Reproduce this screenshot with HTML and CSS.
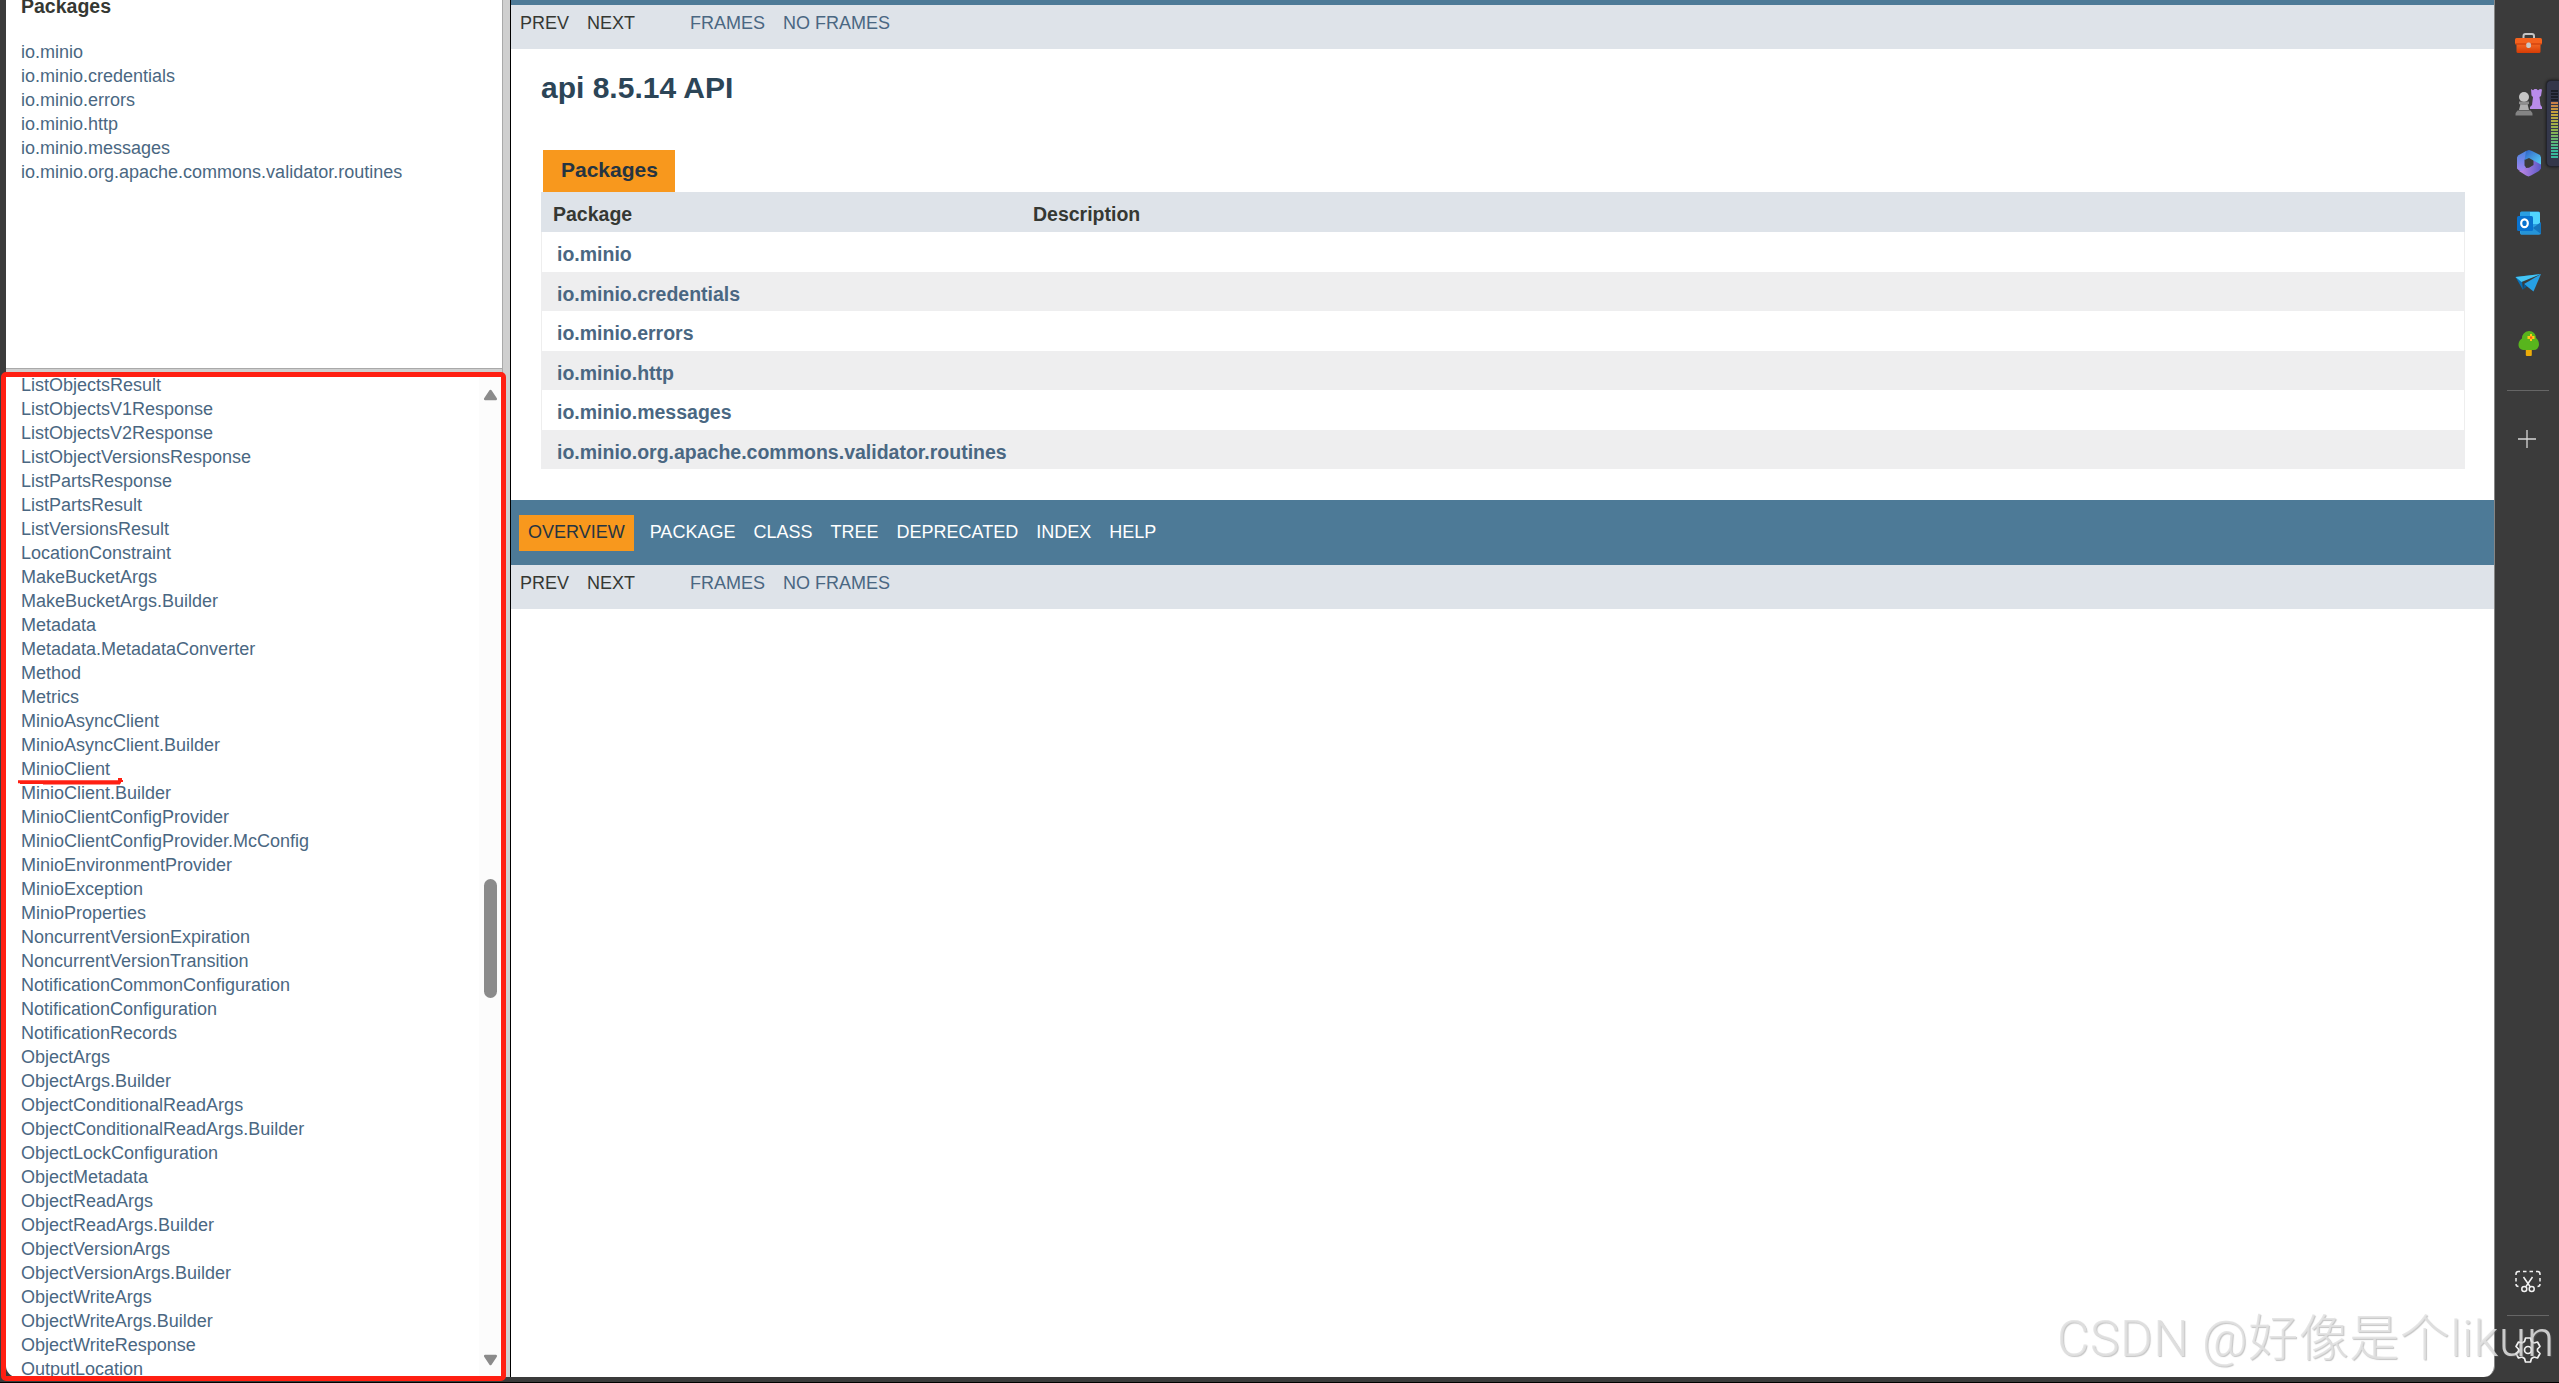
FILE: index.html
```html
<!DOCTYPE html>
<html lang="en">
<head>
  <meta charset="UTF-8">
  <title>api 8.5.14 API</title>
  <link rel="stylesheet" href="styles.css">
</head>
<body>
  <div class="window">
    <div class="frameset">
      <!-- Left frames -->
      <div class="left-container">
        <div class="package-frame">
          <h2>Packages</h2>
          <ul>
            <li><a>io.minio</a></li>
            <li><a>io.minio.credentials</a></li>
            <li><a>io.minio.errors</a></li>
            <li><a>io.minio.http</a></li>
            <li><a>io.minio.messages</a></li>
            <li><a>io.minio.org.apache.commons.validator.routines</a></li>
          </ul>
        </div>
        <div class="class-frame">
          <ul>
            <li><a>ListObjectsResult</a></li>
            <li><a>ListObjectsV1Response</a></li>
            <li><a>ListObjectsV2Response</a></li>
            <li><a>ListObjectVersionsResponse</a></li>
            <li><a>ListPartsResponse</a></li>
            <li><a>ListPartsResult</a></li>
            <li><a>ListVersionsResult</a></li>
            <li><a>LocationConstraint</a></li>
            <li><a>MakeBucketArgs</a></li>
            <li><a>MakeBucketArgs.Builder</a></li>
            <li><a>Metadata</a></li>
            <li><a>Metadata.MetadataConverter</a></li>
            <li><a>Method</a></li>
            <li><a>Metrics</a></li>
            <li><a>MinioAsyncClient</a></li>
            <li><a>MinioAsyncClient.Builder</a></li>
            <li class="marked"><a>MinioClient</a>
              <svg class="underline" width="106" height="8" viewBox="0 0 106 8"><path d="M0 2.200H100V0H104V2H105V4H103V5.500H102V6.600H25V6H2V5.300H0Z" fill="#ff1f12"/></svg>
            </li>
            <li><a>MinioClient.Builder</a></li>
            <li><a>MinioClientConfigProvider</a></li>
            <li><a>MinioClientConfigProvider.McConfig</a></li>
            <li><a>MinioEnvironmentProvider</a></li>
            <li><a>MinioException</a></li>
            <li><a>MinioProperties</a></li>
            <li><a>NoncurrentVersionExpiration</a></li>
            <li><a>NoncurrentVersionTransition</a></li>
            <li><a>NotificationCommonConfiguration</a></li>
            <li><a>NotificationConfiguration</a></li>
            <li><a>NotificationRecords</a></li>
            <li><a>ObjectArgs</a></li>
            <li><a>ObjectArgs.Builder</a></li>
            <li><a>ObjectConditionalReadArgs</a></li>
            <li><a>ObjectConditionalReadArgs.Builder</a></li>
            <li><a>ObjectLockConfiguration</a></li>
            <li><a>ObjectMetadata</a></li>
            <li><a>ObjectReadArgs</a></li>
            <li><a>ObjectReadArgs.Builder</a></li>
            <li><a>ObjectVersionArgs</a></li>
            <li><a>ObjectVersionArgs.Builder</a></li>
            <li><a>ObjectWriteArgs</a></li>
            <li><a>ObjectWriteArgs.Builder</a></li>
            <li><a>ObjectWriteResponse</a></li>
            <li><a>OutputLocation</a></li>
          </ul>
          <div class="scrollbar">
            <svg width="15" height="12" viewBox="0 0 15 12"><path d="M7.500 2L12.800 10H2.200Z" fill="#8b8b8b" stroke="#8b8b8b" stroke-width="2.500" stroke-linejoin="round"/></svg>
            <div class="thumb"></div>
            <svg width="15" height="12" viewBox="0 0 15 12"><path d="M7.500 10L12.800 2H2.200Z" fill="#8b8b8b" stroke="#8b8b8b" stroke-width="2.500" stroke-linejoin="round"/></svg>
          </div>
        </div>
      </div>
      <div class="splitter"></div>

      <!-- Right frame -->
      <div class="right-container">
        <div class="top-nav"></div>
        <div class="sub-nav">
          <span>PREV</span><span>NEXT</span>
          <div class="frame-links"><a>FRAMES</a><a>NO FRAMES</a></div>
        </div>
        <h1>api 8.5.14 API</h1>
        <div class="content">
          <div class="caption">Packages</div>
          <table>
            <tr><th class="col-first">Package</th><th>Description</th></tr>
            <tr><td><a>io.minio</a></td><td></td></tr>
            <tr class="alt"><td><a>io.minio.credentials</a></td><td></td></tr>
            <tr><td><a>io.minio.errors</a></td><td></td></tr>
            <tr class="alt"><td><a>io.minio.http</a></td><td></td></tr>
            <tr><td><a>io.minio.messages</a></td><td></td></tr>
            <tr class="alt"><td><a>io.minio.org.apache.commons.validator.routines</a></td><td></td></tr>
          </table>
        </div>
        <div class="bottom-nav">
          <span class="active">OVERVIEW</span>
          <a>PACKAGE</a><a>CLASS</a><a>TREE</a><a>DEPRECATED</a><a>INDEX</a><a>HELP</a>
        </div>
        <div class="sub-nav">
          <span>PREV</span><span>NEXT</span>
          <div class="frame-links"><a>FRAMES</a><a>NO FRAMES</a></div>
        </div>
      </div>
    </div>

    <!-- Browser sidebar -->
    <div class="sidebar">
      <div class="apps">
        <svg viewBox="0 0 28 28">
          <defs><linearGradient id="box" x1="0" y1="0" x2="0" y2="1"><stop offset="0" stop-color="#f9702a"/><stop offset="1" stop-color="#d63c05"/></linearGradient></defs>
          <path d="M9.500 10V7Q9.500 5 11.500 5H18Q20 5 20 7V10" fill="none" stroke="#c4c4c4" stroke-width="2"/>
          <rect x="2.500" y="13" width="24" height="11" rx="1.500" fill="url(#box)"/>
          <rect x="1" y="9" width="27" height="6.500" rx="1.500" fill="#f4611d"/>
          <path d="M1.500 15H27.500" stroke="#c43808"/>
          <rect x="12.300" y="13.500" width="4.600" height="5.500" rx="1.800" fill="#c8c8c8"/>
        </svg>
        <svg viewBox="0 0 28 28">
          <path d="M17 0L19 1.200L20.500 0L22.500 0L24 1.200L26 0L28 0.500L27 7L25.500 8L26.500 16L28 18V20H16V18L18 16L19 8L17.500 6.500Z" fill="#b98bea"/>
          <circle cx="10" cy="8" r="5" fill="#c6c6c6"/>
          <path d="M7 13H13L15 21H5Z" fill="#b0b0b0"/>
          <path d="M5 12.500H15V15L12 16H8L5 15Z" fill="#8e8e8e"/>
          <path d="M3.500 21.500H16.500Q18.500 23 18.500 26.500H1.500Q1.500 23 3.500 21.500Z" fill="#848484"/>
        </svg>
        <svg viewBox="0 0 28 28">
          <defs>
            <linearGradient id="ma" x1="0" y1="0" x2="1" y2="1"><stop offset="0" stop-color="#2f5fc4"/><stop offset="1" stop-color="#58d0f8"/></linearGradient>
            <linearGradient id="mb" x1="0" y1="0" x2="0" y2="1"><stop offset="0" stop-color="#4a86e0"/><stop offset="1" stop-color="#a883f0"/></linearGradient>
            <linearGradient id="mc" x1="0" y1="0" x2="1" y2="0"><stop offset="0" stop-color="#c48ae6"/><stop offset="1" stop-color="#5b59c8"/></linearGradient>
          </defs>
          <path d="M12 2L4 6.500L3 8.500V19.500L5 21.500L9 23L12 18.500L10.500 16.500V11L12 8Z" fill="url(#mb)"/>
          <path d="M27 13V19.500L25 22L17 26.500L14.500 27.500L12 26.500L5 22L8 22L11.500 19L15 18.800L19.500 16V11Z" fill="url(#mc)"/>
          <path d="M12 2L15 1L18 2L26 6L27 8.500V15.500L19.500 11.500L15 9L10.500 11Z" fill="url(#ma)"/>
        </svg>
        <svg viewBox="0 0 28 28">
          <rect x="6" y="2.500" width="20" height="23" rx="1.500" fill="#2a9fe3"/>
          <path d="M16 3H24.500Q26 3 26 5V15H16Z" fill="#50d5ff"/>
          <path d="M7 18L16 20L27 14V24Q27 25.500 25.500 25.500H7Z" fill="#2594d8"/>
          <path d="M27 13L19 19L27 25Z" fill="#1474bd"/>
          <rect x="3" y="7" width="16" height="15" rx="1.500" fill="#0872cf"/>
          <ellipse cx="10.500" cy="14.300" rx="3.300" ry="3.900" fill="none" stroke="#fff" stroke-width="2.200"/>
        </svg>
        <svg viewBox="0 0 28 28">
          <path d="M1.500 8L27 5L8 12L9 21Z" fill="#0871b8"/>
          <path d="M1.500 8L27 5L7.500 13Z" fill="#45c5f4"/>
          <path d="M27 5L19.500 22.500L10 15Z" fill="#26a0e5"/>
          <path d="M10 15L9 20.500L13 17.500Z" fill="#075995"/>
        </svg>
        <svg viewBox="0 0 28 28">
          <rect x="11.800" y="18" width="6" height="9" rx="1" fill="#edac09"/>
          <path d="M15 2C19 2 22 5 22 9Q25 11 25 16Q24 21 20 21H9Q4 20 4.500 15Q5 11 8 9.500Q8 3 15 2Z" fill="#58b51d"/>
          <path d="M16 5H18V7H20.500V10H18V12H16V10H13.500V7H16Z" fill="#ffc818"/>
          <rect x="16" y="7.500" width="2.200" height="2.200" fill="#f3581c"/>
        </svg>
      </div>
      <div class="divider"></div>
      <svg class="plus" viewBox="0 0 28 28"><path d="M14 5V23M5 14H23" stroke="#d6d6d6" stroke-width="1.300"/></svg>
      <div class="tools">
        <svg viewBox="0 0 28 28" fill="none" stroke="#f2f2f2" stroke-width="1.500">
          <path d="M2 7V6Q2 3.500 4.500 3.500H6M9 3.500H12.500M15.500 3.500H19M22 3.500H23.500Q26 3.500 26 6V7M26 10V13.500M2 10V13.500M2 16Q2 18.500 4.500 18.500M26 16Q26 18.500 23.500 18.500"/>
          <path d="M9.500 9L16 18.500M18.500 9L12 18.500"/>
          <circle cx="10.300" cy="21" r="2.500"/><circle cx="17.700" cy="21" r="2.500"/>
        </svg>
        <div class="divider"></div>
        <svg viewBox="0 0 28 28" fill="none" stroke="#f2f2f2" stroke-width="1.700" stroke-linejoin="round">
          <path d="M11.500 2H16.500L17.500 5.500L20 7L23.500 6L26 10.500L23.500 13V15L26 17.500L23.500 22L20 21L17.500 22.500L16.500 26H11.500L10.500 22.500L8 21L4.500 22L2 17.500L4.500 15V13L2 10.500L4.500 6L8 7L10.500 5.500Z"/>
          <circle cx="14" cy="14" r="3.500"/>
        </svg>
      </div>
    </div>
  </div>

  <div class="highlight"></div>
  <div class="meter"><div class="levels"></div></div>
  <div class="watermark">CSDN @好像是个likun</div>
</body>
</html>
```
FILE: styles.css
```css
body {
  margin: 0;
  background: #3b3b3b;
  font-family: "Liberation Sans", Arial, sans-serif;
  font-size: 18px;
  color: #353833;
  overflow: hidden;
}
h1, h2, ul {
  margin: 0;
  padding: 0;
}
ul {
  list-style: none;
}
a {
  color: #4a6782;
}
.window {
  display: flex;
  box-sizing: border-box;
  height: 1383px;
  padding-left: 6px;
  border-bottom: 1px solid #000;
}
.frameset {
  display: flex;
  flex-shrink: 0;
  width: 2488px;
  height: 1377px;
  border-right: 1px solid #858585;
  border-radius: 0 0 11px 11px;
  background: #fff;
  overflow: hidden;
}

/* Left frames */
.left-container {
  display: flex;
  flex-direction: column;
  flex-shrink: 0;
  width: 496px;
}
.left-container li {
  height: 24px;
  line-height: 24px;
  white-space: nowrap;
}
.package-frame {
  box-sizing: border-box;
  height: 373px;
  padding-left: 15px;
  border-bottom: 4px solid #cfcfcf;
  box-shadow: inset 0 -1px #a9a9a9;
}
.package-frame h2 {
  height: 40px;
  font-size: 19.5px;
  line-height: 12px;
}
.class-frame {
  display: flex;
  justify-content: space-between;
  height: 1004px;
  padding-left: 15px;
  overflow: hidden;
}
.marked {
  position: relative;
}
.underline {
  position: absolute;
  left: -3px;
  top: 21px;
}
.scrollbar {
  display: flex;
  flex-direction: column;
  align-items: center;
  justify-content: space-between;
  box-sizing: border-box;
  width: 23px;
  margin-top: 4px;
  padding: 12px 0 11px;
  background: #fcfcfc;
}
.thumb {
  width: 13px;
  height: 119px;
  margin-top: 121px;
  border-radius: 7px;
  background: #8b8b8b;
}
.splitter {
  box-sizing: border-box;
  flex-shrink: 0;
  width: 9px;
  border-left: 1px solid #a9a9a9;
  border-right: 1px solid #000;
  background: #cfcfcf;
}

/* Right frame */
.right-container {
  flex: 1;
}
.top-nav {
  height: 5px;
  background: #4d7a97;
}
.sub-nav {
  display: flex;
  gap: 18px;
  box-sizing: border-box;
  height: 44px;
  padding-left: 9px;
  background: #dee3e9;
  line-height: 36px;
}
.frame-links {
  display: flex;
  gap: 18px;
  margin-left: 37px;
}
h1 {
  height: 101px;
  padding-left: 30px;
  color: #2c4557;
  font-size: 30px;
  line-height: 77px;
}
.content {
  height: 350px;
  padding-left: 30px;
}
.caption {
  width: 114px;
  height: 42px;
  margin-left: 2px;
  padding-left: 18px;
  background: #f8981d;
  color: #253441;
  font-size: 21px;
  font-weight: bold;
  line-height: 40px;
}
table {
  width: 1924px;
  border-collapse: collapse;
  box-shadow: inset 1px 0 #eee, inset -1px 0 #eee;
  font-size: 19.5px;
}
th, td {
  box-sizing: border-box;
  height: 39.5px;
  padding: 6px 0 0 16px;
  line-height: 33px;
  font-weight: bold;
  text-align: left;
}
th {
  height: 40px;
  padding: 5px 0 0 12px;
  background: #dee3e9;
  line-height: 35px;
}
.col-first {
  width: 480px;
}
.alt {
  background: #eeeeef;
}
.bottom-nav {
  display: flex;
  align-items: flex-start;
  gap: 18px;
  box-sizing: border-box;
  height: 65px;
  padding: 15px 0 0 8px;
  background: #4d7a97;
  line-height: 34px;
}
.bottom-nav a {
  color: #fff;
}
.bottom-nav .active {
  height: 36px;
  padding: 0 9px;
  margin-right: -2px;
  background: #f8981d;
  color: #253441;
}

/* Browser sidebar */
.sidebar {
  display: flex;
  flex-direction: column;
  align-items: center;
  box-sizing: border-box;
  flex: 1;
  height: 1382px;
  padding: 13px 0 18px 1px;
}
.sidebar svg {
  display: block;
  width: 28px;
  height: 28px;
}
.apps svg {
  margin: 16px 0 32px;
}
.apps {
  height: 377px;
}
.divider {
  width: 42px;
  height: 1px;
  background: #666;
}
.sidebar .plus {
  margin: 34px 2px 0 0;
}
.tools {
  display: flex;
  flex-direction: column;
  align-items: center;
  margin-top: auto;
}
.tools .divider {
  margin: 19px 0 20px;
}

/* Overlays */
.highlight {
  position: absolute;
  left: 1px;
  top: 372px;
  width: 495px;
  height: 999px;
  border: 5px solid #ff1f12;
  border-radius: 5px;
}
.meter {
  position: absolute;
  right: 0;
  top: 80px;
  box-sizing: border-box;
  width: 13px;
  height: 87px;
  padding: 9px 1px 9px 4px;
  border: solid #23242c;
  border-width: 1px 0 1px 1px;
  border-radius: 5px 0 0 5px;
  background: #34374a;
  box-shadow: 0 0 3px #111;
}
.levels {
  height: 68px;
  background: repeating-linear-gradient(transparent 0 2px, #34374a 2px 3px), linear-gradient(#1c1e28 0 16%, #c77b4b 17%, #c3a63b 35%, #8db250 60%, #39b99b 90%);
}
.watermark {
  position: absolute;
  left: 2057px;
  top: 1303px;
  color: rgba(226, 226, 226, 0.85);
  font: 300 50px/72px Roboto, "Noto Sans CJK SC", sans-serif;
  letter-spacing: 0.5px;
  text-shadow: 1px 1px 1px rgba(110, 110, 110, 0.4);
  white-space: nowrap;
}
```
